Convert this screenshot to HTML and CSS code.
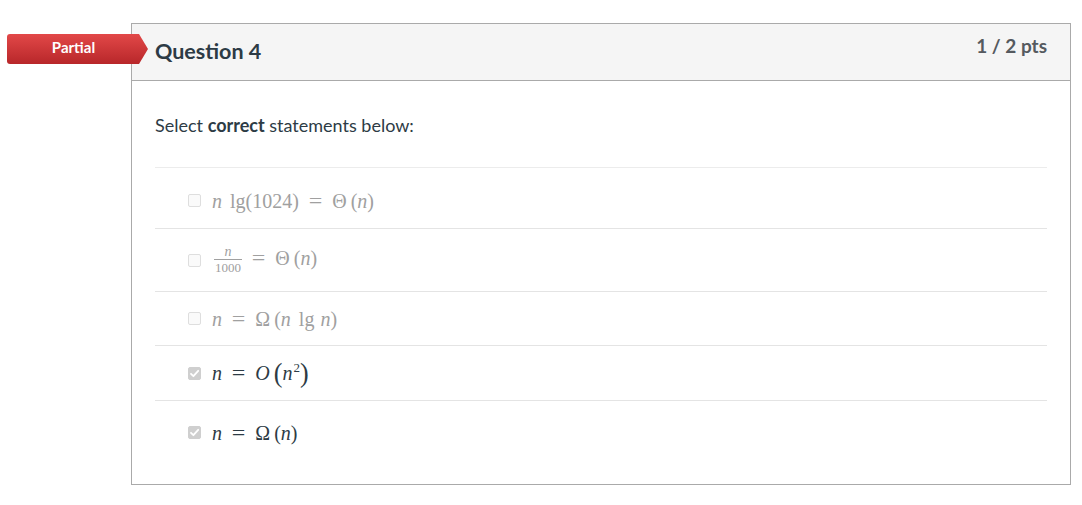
FILE: index.html
```html
<!DOCTYPE html>
<html>
<head>
<meta charset="utf-8">
<link rel="stylesheet" href="styles.css">
</head>
<body>
<div class="wrap">
  <div class="badge"><span>Partial</span></div>
  <div class="card">
    <div class="header">
      <div class="title">Question 4</div>
      <div class="pts">1 / 2 pts</div>
    </div>
    <div class="body">
      <div class="intro">Select <b>correct</b> statements below:</div>
      <div class="answers">
        <div class="answer a1 off">
          <span class="cb"></span>
          <span class="math"><i>n</i><span class="op">lg</span>(1024)<span class="rel">=</span>Θ<span class="sp"></span>(<i>n</i>)</span>
        </div>
        <div class="answer a2 off">
          <span class="cb"></span>
          <span class="math"><span class="frac"><span class="num"><i>n</i></span><span class="den">1000</span></span><span class="rel">=</span>Θ<span class="sp"></span>(<i>n</i>)</span>
        </div>
        <div class="answer a3 off">
          <span class="cb"></span>
          <span class="math"><i>n</i><span class="rel">=</span>Ω<span class="sp"></span>(<i>n</i><span class="op">lg</span><span class="sp2"></span><i>n</i>)</span>
        </div>
        <div class="answer a4 on">
          <span class="cb checked"><svg viewBox="0 0 13 13" width="13" height="13"><path d="M3 6.8 L5.4 9.2 L10.2 3.8" fill="none" stroke="#fff" stroke-width="1.8" stroke-linecap="round" stroke-linejoin="round"/></svg></span>
          <span class="math"><i>n</i><span class="rel">=</span><i>O</i><span class="sp"></span><span class="big">(</span><i>n</i><sup>2</sup><span class="big">)</span></span>
        </div>
        <div class="answer a5 on">
          <span class="cb checked"><svg viewBox="0 0 13 13" width="13" height="13"><path d="M3 6.8 L5.4 9.2 L10.2 3.8" fill="none" stroke="#fff" stroke-width="1.8" stroke-linecap="round" stroke-linejoin="round"/></svg></span>
          <span class="math"><i>n</i><span class="rel">=</span>Ω<span class="sp"></span>(<i>n</i>)</span>
        </div>
      </div>
    </div>
  </div>
</div>
</body>
</html>
```
FILE: styles.css
```css
* { box-sizing: border-box; }
html, body { margin: 0; padding: 0; background: #fff; }
body { font-family: Lato, "Open Sans", sans-serif; color: #2d3b45; }

.wrap {
  position: relative;
  padding: 23px 0 0 131px;
}

.badge {
  position: absolute;
  left: 7px;
  top: 34px;
  width: 141px;
  height: 30px;
  background: linear-gradient(#e24848, #b8272a);
  border-radius: 3px 0 0 3px;
  clip-path: polygon(0 0, calc(100% - 9px) 0, 100% 50%, calc(100% - 9px) 100%, 0 100%);
  color: #fff;
  font-weight: 700;
  font-size: 15px;
  display: flex;
  align-items: center;
}
.badge span { width: 133px; text-align: center; line-height: 18px; margin-top: -4px; }

.card {
  width: 940px;
  border: 1px solid #aaaaaa;
  background: #fff;
}

.header {
  height: 57px;
  background: #f5f5f5;
  border-bottom: 1px solid #aaaaaa;
  display: flex;
  justify-content: space-between;
  align-items: flex-start;
  padding: 0 23px;
}
.title {
  font-size: 21.5px;
  font-weight: 700;
  line-height: 26px;
  margin-top: 14px;
  color: #2d3b45;
}
.pts {
  font-size: 19px;
  font-weight: 700;
  line-height: 22px;
  margin-top: 11px;
  color: #555a5f;
}

.body { padding: 0 23px 29px; }

.intro {
  font-size: 18px;
  line-height: 24px;
  padding: 32px 0 30px;
  border-bottom: 1px solid #ececec;
}
.intro b { font-weight: 700; }

.answer {
  display: flex;
  align-items: center;
  padding-left: 33px;
  border-top: 1px solid #e4e4e4;
}
.answer:first-child { border-top: none; }
.a1 { height: 60px; padding-top: 5px; }
.a2 { height: 63px; }
.a3 { height: 54px; }
.a4 { height: 55px; }
.a5 { height: 55px; padding-top: 9px; }

.cb {
  width: 13px;
  height: 13px;
  border: 1px solid #dedede;
  border-radius: 2px;
  background: #fafafa;
  flex: none;
  display: flex;
}
.cb.checked { background: #cfcfcf; border-color: #cfcfcf; }
.cb svg { margin: -1px; }

.math {
  margin-left: 11px;
  font-family: "Liberation Serif", "Times New Roman", serif;
  font-size: 20px;
  line-height: 24px;
  white-space: nowrap;
  display: inline-block;
}
.off .math { color: #a0a0a0; }
.on .math { color: #2d3b45; }
.math i { font-style: italic; }
.op { margin-left: 8px; }
.rel { margin: 0 11px; display: inline-block; transform: scaleX(1.2); }
.sp { display: inline-block; width: 4px; }
.sp2 { display: inline-block; width: 6px; }
.frac {
  display: inline-block;
  width: 28px;
  margin-left: 2px;
  vertical-align: middle;
  text-align: center;
}
.num { display: block; font-size: 14px; line-height: 12px; border-bottom: 1px solid currentColor; padding-bottom: 1px; }
.den { display: block; font-size: 13px; line-height: 13px; padding-top: 1px; }
.big { font-size: 26px; line-height: 20px; display: inline-block; transform: scaleY(1.05); vertical-align: -2px; }
sup { font-size: 13px; line-height: 0; vertical-align: 8px; margin-left: 1px; }
```
